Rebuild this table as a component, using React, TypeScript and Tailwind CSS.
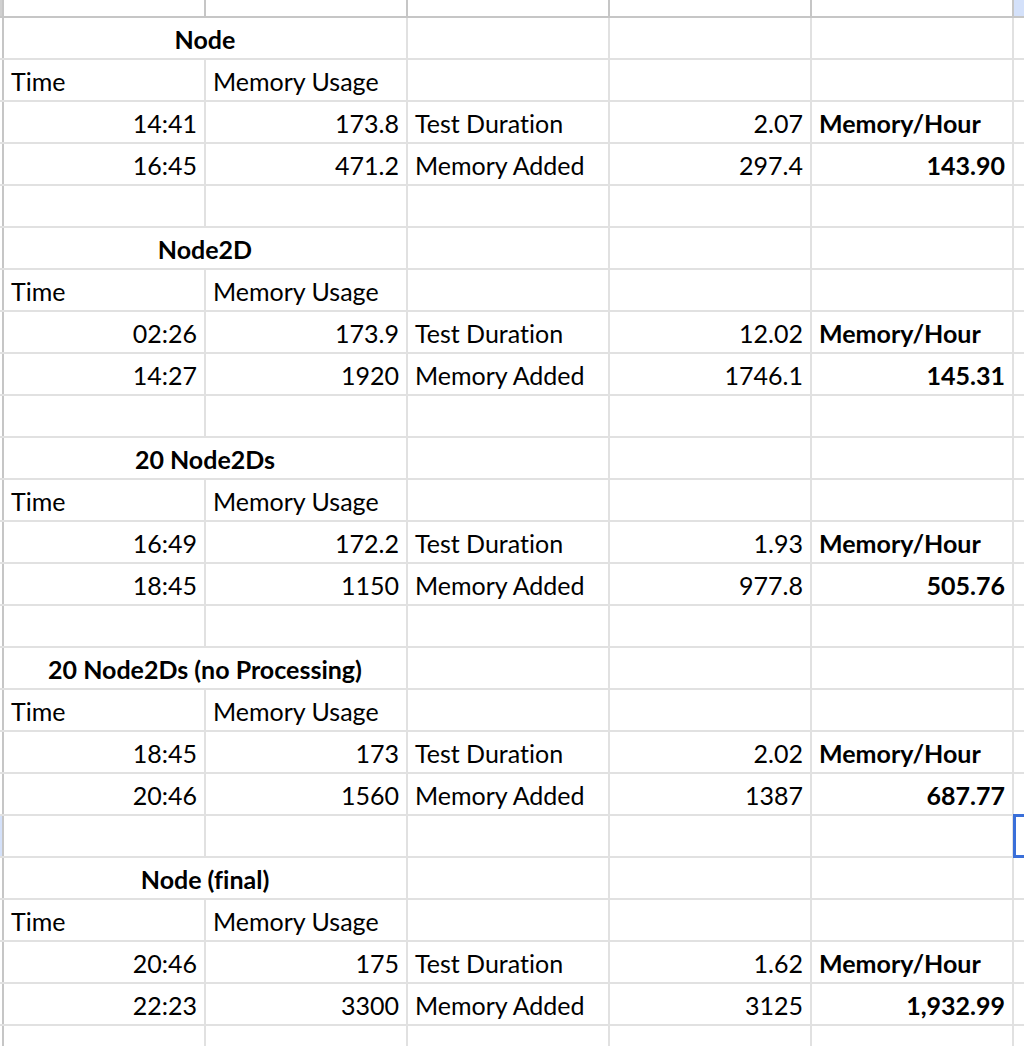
import React from 'react';

type Block = {
  title: string;
  start: [string, string, string];
  end: [string, string, string, string];
};

const blocks: Block[] = [
  { title: 'Node', start: ['14:41', '173.8', '2.07'], end: ['16:45', '471.2', '297.4', '143.90'] },
  { title: 'Node2D', start: ['02:26', '173.9', '12.02'], end: ['14:27', '1920', '1746.1', '145.31'] },
  { title: '20 Node2Ds', start: ['16:49', '172.2', '1.93'], end: ['18:45', '1150', '977.8', '505.76'] },
  { title: '20 Node2Ds (no Processing)', start: ['18:45', '173', '2.02'], end: ['20:46', '1560', '1387', '687.77'] },
  { title: 'Node (final)', start: ['20:46', '175', '1.62'], end: ['22:23', '3300', '3125', '1,932.99'] },
];

interface CellProps {
  children?: React.ReactNode;
  align?: 'left' | 'right' | 'center';
  bold?: boolean;
  wide?: boolean;
}

const Cell: React.FC<CellProps> = ({ children, align = 'left', bold, wide }) => {
  const justify = align === 'right' ? 'justify-end' : align === 'center' ? 'justify-center' : 'justify-start';
  return (
    <div
      className={`h-full shrink-0 border-r-2 border-[#e1e1e1] flex items-center px-[7px] pt-[4px] whitespace-nowrap ${
        wide ? 'w-[404px]' : 'w-[202px]'
      } ${justify} ${bold ? 'font-bold' : ''}`}
    >
      {children}
    </div>
  );
};

const Row: React.FC<{ children?: React.ReactNode; selected?: boolean }> = ({ children, selected }) => (
  <div className="flex h-[42px] border-b-2 border-[#e1e1e1]">
    <div className={`w-[4px] h-full shrink-0 border-r-2 border-[#c6c6c6] ${selected ? 'bg-[#d4e1fa]' : ''}`}></div>
    {children}
    <div className="flex-1 h-full"></div>
  </div>
);

const Empty = () => (
  <>
    <Cell />
    <Cell />
    <Cell />
    <Cell />
    <Cell />
  </>
);

export default function App() {
  return (
    <div className="relative w-[1024px] h-[1046px] overflow-hidden bg-white text-black text-[25px] [font-variant-ligatures:none] font-['Lato','Noto_Sans',sans-serif]">
      {/* column letters strip, cut off at the top */}
      <div className="flex h-[18px] border-b-2 border-[#c6c6c6]">
        <div className="w-[4px] h-full shrink-0 bg-[#d0d0d0] border-r-2 border-[#c6c6c6]"></div>
        {[0, 1, 2, 3, 4].map((i) => (
          <div key={i} className="w-[202px] h-full shrink-0 border-r-2 border-[#c6c6c6]"></div>
        ))}
        <div className="flex-1 h-full bg-[#d4e1fa]"></div>
      </div>

      {blocks.map((b, bi) => (
        <React.Fragment key={b.title}>
          <Row>
            <Cell wide align="center" bold>
              {b.title}
            </Cell>
            <Cell />
            <Cell />
            <Cell />
          </Row>
          <Row>
            <Cell>Time</Cell>
            <Cell>Memory Usage</Cell>
            <Cell />
            <Cell />
            <Cell />
          </Row>
          <Row>
            <Cell align="right">{b.start[0]}</Cell>
            <Cell align="right">{b.start[1]}</Cell>
            <Cell>Test Duration</Cell>
            <Cell align="right">{b.start[2]}</Cell>
            <Cell bold>Memory/Hour</Cell>
          </Row>
          <Row>
            <Cell align="right">{b.end[0]}</Cell>
            <Cell align="right">{b.end[1]}</Cell>
            <Cell>Memory Added</Cell>
            <Cell align="right">{b.end[2]}</Cell>
            <Cell align="right" bold>
              {b.end[3]}
            </Cell>
          </Row>
          <Row selected={bi === 3}>
            <Empty />
          </Row>
        </React.Fragment>
      ))}

      {/* active cell selection */}
      <div className="absolute left-[1013px] top-[814px] w-[60px] h-[44px] border-[3px] border-[#3a6fd9]"></div>
    </div>
  );
}
